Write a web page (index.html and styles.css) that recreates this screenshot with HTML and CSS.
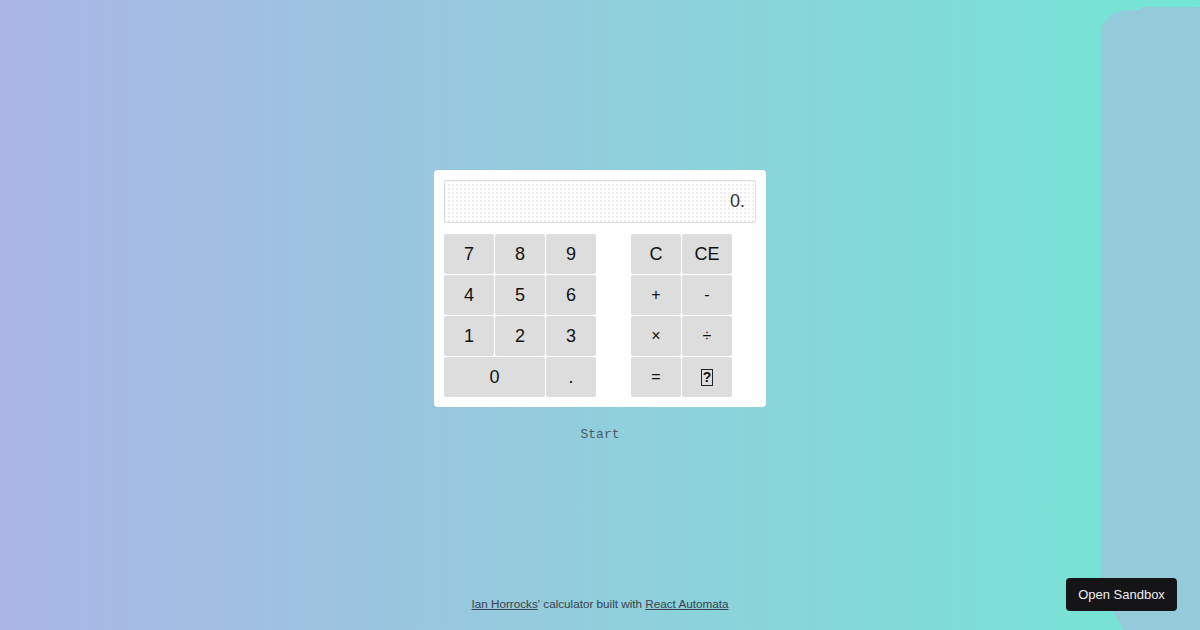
FILE: index.html
```html
<!DOCTYPE html>
<html>
<head>
<meta charset="utf-8">
<link rel="stylesheet" href="styles.css">
</head>
<body>
<div class="side-panel"></div>
<div class="page">
  <main class="main">
    <div class="calc">
      <div class="display">0.</div>
      <div class="keys">
        <div class="pad digits">
          <button class="key">7</button>
          <button class="key">8</button>
          <button class="key">9</button>
          <button class="key">4</button>
          <button class="key">5</button>
          <button class="key">6</button>
          <button class="key">1</button>
          <button class="key">2</button>
          <button class="key">3</button>
          <button class="key wide">0</button>
          <button class="key">.</button>
        </div>
        <div class="pad ops">
          <button class="key">C</button>
          <button class="key">CE</button>
          <button class="key small">+</button>
          <button class="key small">-</button>
          <button class="key small">×</button>
          <button class="key small">÷</button>
          <button class="key small">=</button>
          <button class="key"><span class="tofu">?</span></button>
        </div>
      </div>
    </div>
    <div class="state">Start</div>
  </main>
  <footer class="footer"><a href="#">Ian Horrocks</a>' calculator built with <a href="#">React Automata</a></footer>
</div>
<a class="sandbox" href="#">Open Sandbox</a>
</body>
</html>
```
FILE: styles.css
```css
html, body {
  margin: 0;
  padding: 0;
}
body {
  width: 1200px;
  height: 630px;
  overflow: hidden;
  position: relative;
  background: linear-gradient(to right, #abb6e6 0%, #91cedc 50%, #73e6d5 100%);
  font-family: "Liberation Sans", Arial, sans-serif;
}
.side-panel {
  position: absolute;
  left: 1100px;
  top: 7px;
  width: 100px;
  height: 623px;
  background: #93cbdb;
  clip-path: polygon(40px 0, 100px 0, 100px 100%, 24px 100%, 1px 585px, 1px 20px, 12px 7px, 24px 3px, 40px 3px);
}
.page {
  position: relative;
  height: 630px;
  display: flex;
  flex-direction: column;
  align-items: center;
}
.main {
  padding-top: 170px;
  display: flex;
  flex-direction: column;
  align-items: center;
}
.calc {
  background: #fff;
  border-radius: 4px;
  padding: 10px;
  width: 312px;
}
.display {
  height: 41px;
  border: 1px solid #dcdcdc;
  border-radius: 2px;
  background-color: #fff;
  background-image: radial-gradient(circle at 1px 1px, #d9d9d9 0.6px, transparent 0.8px);
  background-size: 4px 4px;
  background-position: 3px 3px;
  color: #333;
  font-size: 18px;
  line-height: 41px;
  text-align: right;
  padding-right: 10px;
}
.keys {
  display: flex;
  gap: 35px;
  margin-top: 11px;
}
.pad {
  display: grid;
  grid-auto-rows: 40px;
  gap: 1px;
}
.digits {
  grid-template-columns: repeat(3, 50px);
}
.ops {
  grid-template-columns: repeat(2, 50px);
}
.key {
  border: none;
  margin: 0;
  padding: 0;
  background: #dddddd;
  border-radius: 2px;
  font-family: "Liberation Sans", Arial, sans-serif;
  font-size: 18px;
  color: #111;
  display: flex;
  align-items: center;
  justify-content: center;
}
.key.small {
  font-size: 16px;
}
.wide {
  grid-column: span 2;
}
.tofu {
  display: inline-block;
  border: 1px solid #222;
  font-size: 14px;
  line-height: 15px;
  width: 12px;
  height: 17px;
  text-align: center;
  font-weight: bold;
  box-sizing: border-box;
  margin-top: 1px;
}
.state {
  margin-top: 20px;
  font-family: "Liberation Mono", "Courier New", monospace;
  font-size: 13px;
  color: #4c5a66;
}
.footer {
  margin-top: auto;
  padding-bottom: 20px;
  font-size: 11.7px;
  color: #37424e;
}
.footer a {
  color: #37424e;
}
.sandbox {
  position: absolute;
  left: 1066px;
  top: 578px;
  width: 111px;
  height: 33px;
  box-sizing: border-box;
  background: #151417;
  border-radius: 4px;
  color: #f0f0f0;
  font-size: 13px;
  text-decoration: none;
  display: flex;
  align-items: center;
  justify-content: center;
  font-family: "Liberation Sans", Arial, sans-serif;
}
```
